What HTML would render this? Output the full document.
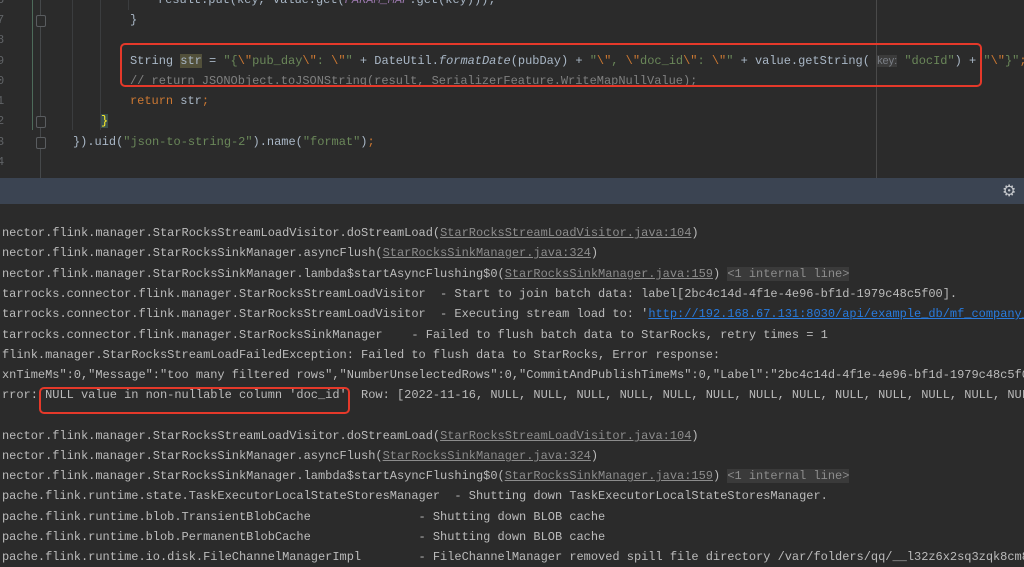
<!DOCTYPE html>
<html><head><meta charset="utf-8"><style>
*{margin:0;padding:0}
body{width:1024px;height:566px;overflow:hidden;background:#2b2b2b;position:relative;font-family:"Liberation Mono",monospace;font-size:12px;color:#a9b7c6}
.l{position:absolute;white-space:pre;height:20px;line-height:20px;letter-spacing:-0.02px}
.c{color:#bbbbbb}
.c .l{margin-top:1px}
.s{color:#6a8759}.k{color:#cc7832}.p{color:#9876aa}.cm{color:#808080}
.u{color:#8c8c8c;text-decoration:underline}
.ln{color:#606366;position:absolute;left:-3px;font-size:12px}
.fold{position:absolute;left:36px;width:8px;height:10px;border:1px solid #5a5d60;border-radius:2px;background:#2b2b2b}
.vl{position:absolute;width:1px;background:#3b3d3f}
.box{position:absolute;border:2px solid #e5392a;border-radius:5px}
</style></head><body>
<div class="vl" style="left:32px;top:0;height:130px;background:#4d6b5a"></div>
<div class="vl" style="left:40px;top:0;height:178px;background:#45484a"></div>
<div class="vl" style="left:72px;top:0;height:130px"></div>
<div class="vl" style="left:100px;top:0;height:130px"></div>
<div class="vl" style="left:128px;top:0;height:10px"></div>
<div class="vl" style="left:876px;top:0;height:178px;background:#4a4a4a"></div>
<div class="fold" style="top:15px"></div>
<div class="fold" style="top:116px"></div>
<div class="fold" style="top:137px"></div>
<div class="l ln" style="top:-10px">6</div>
<div class="l ln" style="top:10px">7</div>
<div class="l ln" style="top:30px">8</div>
<div class="l ln" style="top:51px">9</div>
<div class="l ln" style="top:71px">0</div>
<div class="l ln" style="top:91px">1</div>
<div class="l ln" style="top:111px">2</div>
<div class="l ln" style="top:132px">3</div>
<div class="l ln" style="top:152px">4</div>

<div class="l" style="left:158px;top:-10px">result.put(key, value.get(<i class="p">PARAM_MAP</i>.get(key)));</div>
<div class="l" style="left:130px;top:10px">}</div>
<div class="l" style="left:130px;top:51px">String <span style="background:#52503a">str</span> = <span class="s">"{<span class="k">\"</span>pub_day<span class="k">\"</span>: <span class="k">\"</span>"</span> + DateUtil.<i>formatDate</i>(pubDay) + <span class="s">"<span class="k">\"</span>, <span class="k">\"</span>doc_id<span class="k">\"</span>: <span class="k">\"</span>"</span> + value.getString( <span style="color:#7a7e85;background:#3b3b3b;font-family:'Liberation Sans',sans-serif;font-size:11px">key:</span> <span class="s">"docId"</span>) + <span class="s">"<span class="k">\"</span>}"</span><span class="k">;</span></div>
<div class="l cm" style="left:130px;top:71px">// return JSONObject.toJSONString(result, SerializerFeature.WriteMapNullValue);</div>
<div class="l" style="left:130px;top:91px"><span class="k">return</span> str<span class="k">;</span></div>
<div class="l" style="left:101px;top:111px"><span style="color:#ffef28;background:#3b514d">}</span></div>
<div class="l" style="left:73px;top:132px">}).uid(<span class="s">"json-to-string-2"</span>).name(<span class="s">"format"</span>)<span class="k">;</span></div>
<div class="box" style="left:120px;top:43px;width:858px;height:40px"></div>

<div style="position:absolute;left:0;top:178px;width:1024px;height:26px;background:#3b4452"></div>
<div style="position:absolute;left:1002px;top:181px;color:#c5c8cc;font-family:'DejaVu Sans',sans-serif;font-size:16px">⚙</div>

<div class="c">
<div class="l" style="left:2px;top:222px">nector.flink.manager.StarRocksStreamLoadVisitor.doStreamLoad(<span class="u">StarRocksStreamLoadVisitor.java:104</span>)</div>
<div class="l" style="left:2px;top:242px">nector.flink.manager.StarRocksSinkManager.asyncFlush(<span class="u">StarRocksSinkManager.java:324</span>)</div>
<div class="l" style="left:2px;top:263px">nector.flink.manager.StarRocksSinkManager.lambda$startAsyncFlushing$0(<span class="u">StarRocksSinkManager.java:159</span>) <span style="background:#3a3a3a;color:#8c8c8c">&lt;1 internal line&gt;</span></div>
<div class="l" style="left:2px;top:283px">tarrocks.connector.flink.manager.StarRocksStreamLoadVisitor  - Start to join batch data: label[2bc4c14d-4f1e-4e96-bf1d-1979c48c5f00].</div>
<div class="l" style="left:2px;top:303px">tarrocks.connector.flink.manager.StarRocksStreamLoadVisitor  - Executing stream load to: '<span style="color:#287bde;text-decoration:underline">http://192.168.67.131:8030/api/example_db/mf_company_</span></div>
<div class="l" style="left:2px;top:324px">tarrocks.connector.flink.manager.StarRocksSinkManager    - Failed to flush batch data to StarRocks, retry times = 1</div>
<div class="l" style="left:2px;top:344px">flink.manager.StarRocksStreamLoadFailedException: Failed to flush data to StarRocks, Error response:</div>
<div class="l" style="left:2px;top:364px">xnTimeMs":0,"Message":"too many filtered rows","NumberUnselectedRows":0,"CommitAndPublishTimeMs":0,"Label":"2bc4c14d-4f1e-4e96-bf1d-1979c48c5f00</div>
<div class="l" style="left:2px;top:384px">rror: NULL value in non-nullable column 'doc_id'  Row: [2022-11-16, NULL, NULL, NULL, NULL, NULL, NULL, NULL, NULL, NULL, NULL, NULL, NULL, NULL</div>
<div class="l" style="left:2px;top:425px">nector.flink.manager.StarRocksStreamLoadVisitor.doStreamLoad(<span class="u">StarRocksStreamLoadVisitor.java:104</span>)</div>
<div class="l" style="left:2px;top:445px">nector.flink.manager.StarRocksSinkManager.asyncFlush(<span class="u">StarRocksSinkManager.java:324</span>)</div>
<div class="l" style="left:2px;top:465px">nector.flink.manager.StarRocksSinkManager.lambda$startAsyncFlushing$0(<span class="u">StarRocksSinkManager.java:159</span>) <span style="background:#3a3a3a;color:#8c8c8c">&lt;1 internal line&gt;</span></div>
<div class="l" style="left:2px;top:485px">pache.flink.runtime.state.TaskExecutorLocalStateStoresManager  - Shutting down TaskExecutorLocalStateStoresManager.</div>
<div class="l" style="left:2px;top:506px">pache.flink.runtime.blob.TransientBlobCache               - Shutting down BLOB cache</div>
<div class="l" style="left:2px;top:526px">pache.flink.runtime.blob.PermanentBlobCache               - Shutting down BLOB cache</div>
<div class="l" style="left:2px;top:546px">pache.flink.runtime.io.disk.FileChannelManagerImpl        - FileChannelManager removed spill file directory /var/folders/qq/__l32z6x2sq3zqk8cm8x</div>
</div>
<div class="box" style="left:39px;top:387px;width:307px;height:23px"></div>
</body></html>
